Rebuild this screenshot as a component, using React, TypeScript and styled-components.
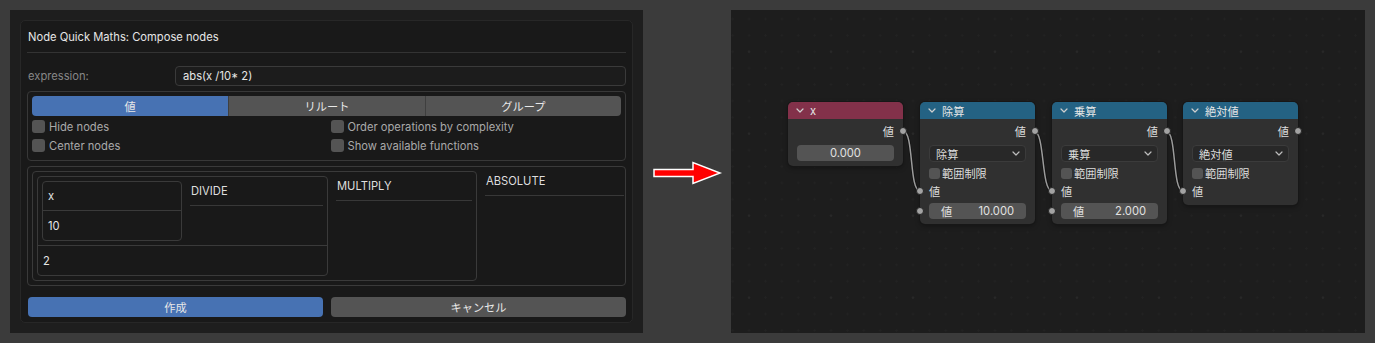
import styled, { createGlobalStyle } from "styled-components";

const GlobalStyle = createGlobalStyle`
  html, body {
    margin: 0;
    background: #3b3b3b;
  }
  body {
    font-family: Inter, "Noto Sans CJK JP", sans-serif;
    font-size: 11.2px;
    color: #e2e2e2;
  }
  * {
    box-sizing: border-box;
  }
`;

const FONT = `Inter, "Noto Sans CJK JP", sans-serif`;

// 左: ダイアログ
const Page = styled.div`
  display: flex;
  align-items: stretch;
  padding: 10px;
  width: 1375px;
  height: 343px;
`;

const LeftPanel = styled.section`
  width: 633px;
  height: 323px;
  padding: 10px;
  background: #1e1e1e;
`;

const Dialog = styled.div`
  width: 613px;
  height: 303px;
  padding: 0 6px 5px;
  background: #191919;
  border: 1px solid #272727;
  border-radius: 5px;
`;

const Title = styled.h1`
  margin: 0;
  height: 32px;
  padding-left: 1px;
  display: flex;
  align-items: center;
  font: 400 11.2px ${FONT};
  color: #e6e6e6;
  border-bottom: 1px solid #333;
`;

const ExprRow = styled.div`
  display: flex;
  align-items: center;
  height: 20px;
  margin-top: 13px;
`;

const ExprLabel = styled.label`
  width: 148px;
  padding-left: 1px;
  color: #878787;
`;

const ExprInput = styled.div`
  flex: 1;
  height: 20px;
  display: flex;
  align-items: center;
  padding-left: 7px;
  border: 1px solid #3a3a3a;
  border-radius: 4px;
  background: #1c1c1c;
  color: #e6e6e6;
`;

const OptionsBox = styled.div`
  margin-top: 5px;
  height: 70px;
  padding: 4px;
  border: 1px solid #383838;
  border-radius: 4px;
`;

const TabBar = styled.div`
  display: grid;
  grid-template-columns: 1fr 1fr 1fr;
  height: 20px;
  border-radius: 4px;
  overflow: hidden;
`;

const Tab = styled.div<{ $active?: boolean }>`
  display: flex;
  align-items: center;
  justify-content: center;
  background: ${(p) => (p.$active ? "#4772b3" : "#545454")};
  color: #e8e8e8;
  & + & {
    border-left: 1px solid #3f3f3f;
  }
`;

const CheckGrid = styled.div`
  display: grid;
  grid-template-columns: 1fr 1fr;
  column-gap: 8px;
  margin-top: 1px;
`;

const CheckRow = styled.div`
  display: flex;
  align-items: center;
  height: 19px;
  gap: 4px;
  color: #a9a9a9;
`;

const CheckBox = styled.span<{ $size?: number }>`
  display: inline-block;
  width: ${(p) => p.$size ?? 13}px;
  height: ${(p) => p.$size ?? 13}px;
  border-radius: 3px;
  background: #545454;
  flex: none;
`;

// 式の木構造
const OpBox = styled.div<{ $top?: number; $grow?: boolean }>`
  display: flex;
  gap: 8px;
  margin-top: ${(p) => p.$top ?? 0}px;
  padding: 4px;
  border: 1px solid #3a3a3a;
  border-radius: 4px;
  ${(p) => (p.$grow ? "flex: 1;" : "")}
`;

const OpColumn = styled.div<{ $width: number }>`
  width: ${(p) => p.$width}px;
  flex: none;
`;

const OpHeading = styled.div`
  height: 25px;
  padding: 3px 0 0 1px;
  line-height: 14px;
  color: #dedede;
  border-bottom: 1px solid #383838;
`;

const DivideBox = styled.div`
  flex: 1;
  border: 1px solid #3a3a3a;
  border-radius: 4px;
`;

const DivideTop = styled.div`
  display: flex;
  gap: 8px;
  padding: 4px;
  border-bottom: 1px solid #3a3a3a;
`;

const ArgStack = styled.div`
  width: 140px;
  border: 1px solid #3a3a3a;
  border-radius: 4px;
`;

const ArgCell = styled.div<{ $h: number }>`
  height: ${(p) => p.$h}px;
  display: flex;
  align-items: center;
  padding-left: 5px;
  color: #e6e6e6;
  & + & {
    border-top: 1px solid #3a3a3a;
  }
`;

const ArgTail = styled.div`
  height: 29px;
  display: flex;
  align-items: center;
  padding-left: 5px;
  color: #e6e6e6;
`;

const ButtonRow = styled.div`
  display: grid;
  grid-template-columns: 1fr 1fr;
  gap: 8px;
  margin-top: 11px;
  padding-left: 1px;
`;

const Button = styled.button<{ $primary?: boolean }>`
  height: 20px;
  border: none;
  border-radius: 4px;
  background: ${(p) => (p.$primary ? "#4772b3" : "#545454")};
  color: #e8e8e8;
  font: 400 11.2px ${FONT};
  padding: 0;
`;

// 矢印
const ArrowSlot = styled.div`
  width: 88px;
  display: flex;
  align-items: center;
  padding: 2px 0 0 10px;
`;

// 右: ノードエディタ
const Canvas = styled.section`
  position: relative;
  width: 634px;
  height: 323px;
  background-color: #1d1d1d;
  background-image: radial-gradient(circle, #282828 1.2px, transparent 1.6px),
    radial-gradient(circle, #222222 0.9px, transparent 1.3px);
  background-size: 82px 82px, 16.4px 16.4px;
  background-position: -23px 0.7px, -6.5px 0.8px;
  overflow: hidden;
`;

const WireLayer = styled.svg`
  position: absolute;
  inset: 0;
  pointer-events: none;
`;

const Node = styled.div<{ $x: number; $y: number }>`
  position: absolute;
  left: ${(p) => p.$x}px;
  top: ${(p) => p.$y}px;
  width: 115px;
  padding-bottom: 5px;
  background: #303030;
  border-radius: 5px;
  box-shadow: 0 0 0 1px #171717, 0 2px 5px rgba(0, 0, 0, 0.35);
`;

const NodeHeader = styled.div<{ $color: string }>`
  height: 17px;
  display: flex;
  align-items: center;
  gap: 6px;
  padding-left: 8px;
  background: ${(p) => p.$color};
  border-radius: 5px 5px 0 0;
  color: #e6e6e6;
`;

const SocketRow = styled.div<{ $out?: boolean; $h?: number }>`
  position: relative;
  height: ${(p) => p.$h ?? 18}px;
  display: flex;
  align-items: center;
  justify-content: ${(p) => (p.$out ? "flex-end" : "flex-start")};
  padding: 0 9px;
  color: #dcdcdc;
`;

const Socket = styled.span<{ $out?: boolean }>`
  position: absolute;
  top: 50%;
  ${(p) => (p.$out ? "right: -4px;" : "left: -4px;")}
  width: 8px;
  height: 8px;
  margin-top: -4px;
  border-radius: 50%;
  background: #a3a3a3;
  border: 1px solid #242424;
`;

const NumberField = styled.div<{ $split?: boolean }>`
  position: relative;
  height: 16px;
  margin: 0 9px;
  display: flex;
  align-items: center;
  justify-content: ${(p) => (p.$split ? "space-between" : "center")};
  padding: 0 12px;
  background: #545454;
  border-radius: 4px;
  color: #e2e2e2;
`;

const FieldRow = styled.div<{ $top: number }>`
  position: relative;
  margin-top: ${(p) => p.$top}px;
`;

const Dropdown = styled.div`
  height: 17px;
  margin: 2px 9px 0;
  display: flex;
  align-items: center;
  justify-content: space-between;
  padding: 0 5px 0 6px;
  background: #282828;
  border: 1px solid #3b3b3b;
  border-radius: 4px;
  color: #dcdcdc;
`;

const ClampRow = styled.div`
  height: 18px;
  margin-top: 2px;
  padding-left: 9px;
  display: flex;
  align-items: center;
  gap: 2px;
  color: #dcdcdc;
`;

function Chevron({ color = "#cfcfcf" }: { color?: string }) {
  return (
    <svg width="8" height="5" viewBox="0 0 8 5">
      <path d="M1 1 L4 4 L7 1" fill="none" stroke={color} strokeWidth="1.2" strokeLinecap="round" strokeLinejoin="round" />
    </svg>
  );
}

function Arrow() {
  return (
    <svg width="70" height="24" viewBox="0 0 70 24">
      <polygon
        points="1,8.5 40,8.5 40,1.5 67,12 40,22.5 40,15.5 1,15.5"
        fill="#ff0000"
        stroke="#ffffff"
        strokeWidth="1.5"
        strokeLinejoin="miter"
      />
    </svg>
  );
}

type MathNodeProps = {
  x: number;
  title: string;
  value?: string;
};

function MathNode({ x, title, value }: MathNodeProps) {
  return (
    <Node $x={x} $y={92}>
      <NodeHeader $color="#246283">
        <Chevron />
        {title}
      </NodeHeader>
      <SocketRow $out $h={24}>
        値<Socket $out />
      </SocketRow>
      <Dropdown>
        {title}
        <Chevron color="#bdbdbd" />
      </Dropdown>
      <ClampRow>
        <CheckBox $size={11} />
        範囲制限
      </ClampRow>
      <SocketRow>
        値<Socket />
      </SocketRow>
      {value && (
        <FieldRow $top={3}>
          <NumberField $split>
            <span>値</span>
            <span>{value}</span>
          </NumberField>
          <Socket />
        </FieldRow>
      )}
    </Node>
  );
}

const wire = (x1: number, y1: number, x2: number, y2: number) =>
  `M${x1},${y1} C${x1 + 11},${y1} ${x2 - 11},${y2} ${x2},${y2}`;

const wires = [wire(172, 121, 189, 181), wire(303, 121, 321, 181), wire(435, 121, 452, 181)];

export default function App() {
  return (
    <>
      <GlobalStyle />
      <Page>
        <LeftPanel>
          <Dialog>
            <Title>Node Quick Maths: Compose nodes</Title>
            <ExprRow>
              <ExprLabel>expression:</ExprLabel>
              <ExprInput>abs(x /10* 2)</ExprInput>
            </ExprRow>
            <OptionsBox>
              <TabBar>
                <Tab $active>値</Tab>
                <Tab>リルート</Tab>
                <Tab>グループ</Tab>
              </TabBar>
              <CheckGrid>
                <CheckRow>
                  <CheckBox />
                  Hide nodes
                </CheckRow>
                <CheckRow>
                  <CheckBox />
                  Order operations by complexity
                </CheckRow>
                <CheckRow>
                  <CheckBox />
                  Center nodes
                </CheckRow>
                <CheckRow>
                  <CheckBox />
                  Show available functions
                </CheckRow>
              </CheckGrid>
            </OptionsBox>
            <OpBox $top={5}>
              <OpBox $grow>
                <DivideBox>
                  <DivideTop>
                    <ArgStack>
                      <ArgCell $h={28}>x</ArgCell>
                      <ArgCell $h={30}>10</ArgCell>
                    </ArgStack>
                    <OpColumn $width={133}>
                      <OpHeading>DIVIDE</OpHeading>
                    </OpColumn>
                  </DivideTop>
                  <ArgTail>2</ArgTail>
                </DivideBox>
                <OpColumn $width={136}>
                  <OpHeading>MULTIPLY</OpHeading>
                </OpColumn>
              </OpBox>
              <OpColumn $width={139}>
                <OpHeading>ABSOLUTE</OpHeading>
              </OpColumn>
            </OpBox>
            <ButtonRow>
              <Button $primary>作成</Button>
              <Button>キャンセル</Button>
            </ButtonRow>
          </Dialog>
        </LeftPanel>
        <ArrowSlot>
          <Arrow />
        </ArrowSlot>
        <Canvas>
          <WireLayer width="634" height="323">
            {wires.map((d) => (
              <g key={d}>
                <path d={d} fill="none" stroke="#141414" strokeWidth="3" />
                <path d={d} fill="none" stroke="#9c9c9c" strokeWidth="1.5" />
              </g>
            ))}
          </WireLayer>
          <Node $x={57} $y={92}>
            <NodeHeader $color="#83314a">
              <Chevron />x
            </NodeHeader>
            <SocketRow $out $h={24}>
              値<Socket $out />
            </SocketRow>
            <FieldRow $top={2}>
              <NumberField>0.000</NumberField>
            </FieldRow>
          </Node>
          <MathNode x={189} title="除算" value="10.000" />
          <MathNode x={321} title="乗算" value="2.000" />
          <MathNode x={452} title="絶対値" />
        </Canvas>
      </Page>
    </>
  );
}
